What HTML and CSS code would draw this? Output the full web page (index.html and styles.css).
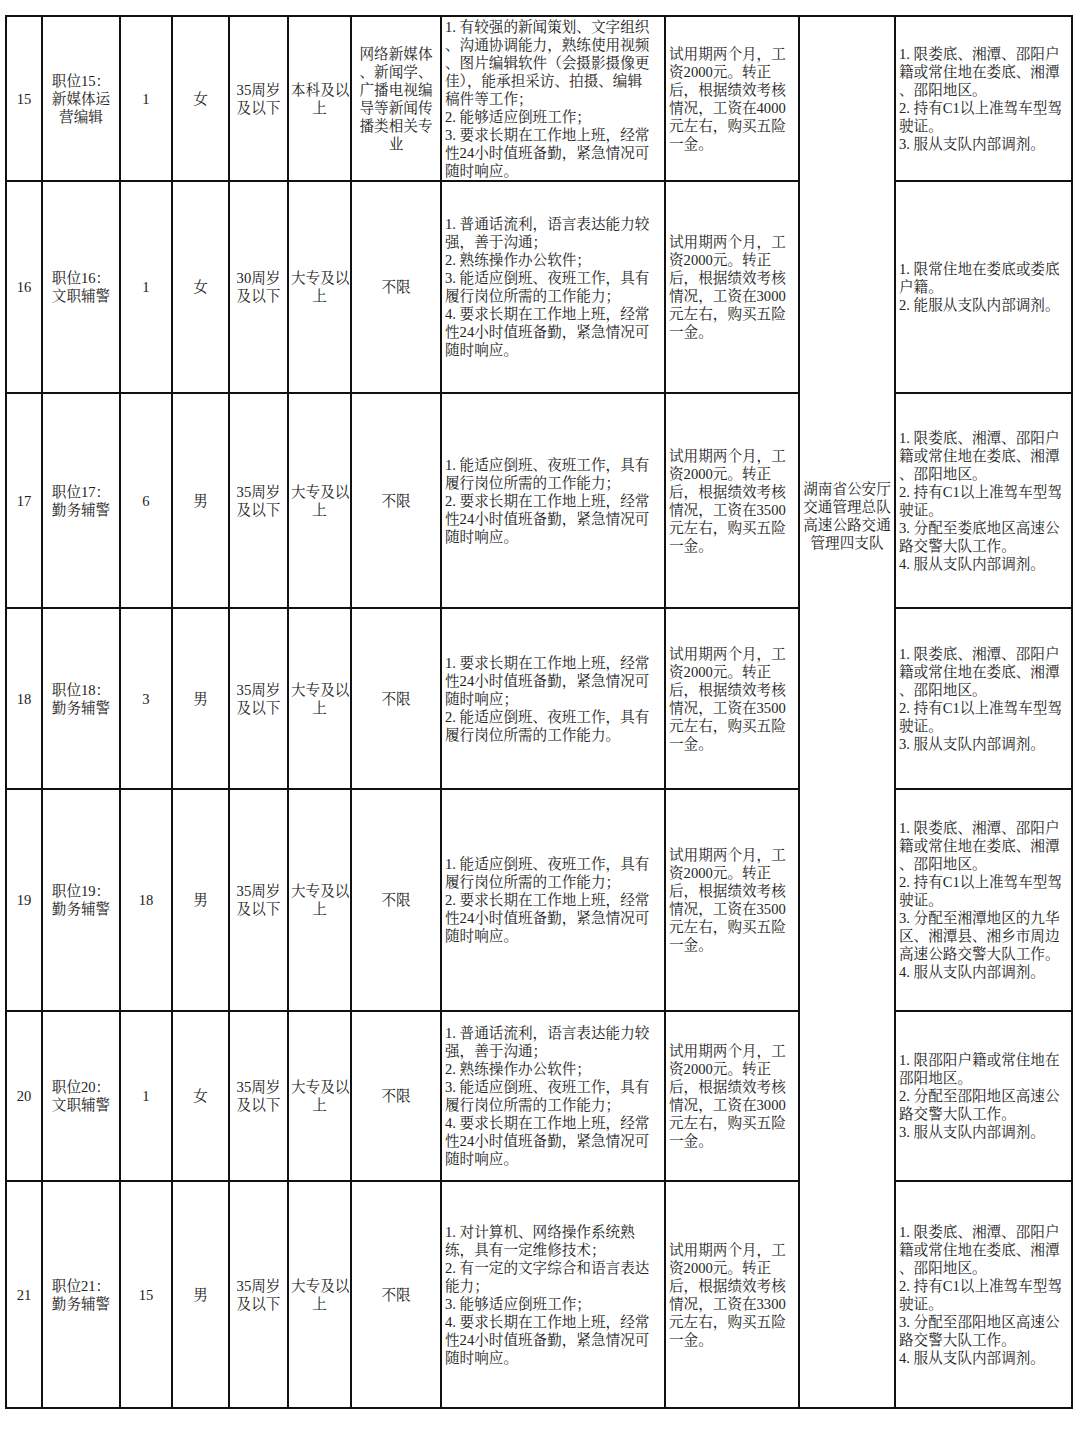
FILE: index.html
```html
<!DOCTYPE html>
<html lang="zh-CN">
<head>
<meta charset="utf-8">
<title>岗位表</title>
<link rel="stylesheet" href="styles.css">
</head>
<body>
<table class="sheet">
  <colgroup>
    <col class="c-no"><col class="c-pos"><col class="c-num"><col class="c-sex"><col class="c-age"><col class="c-edu"><col class="c-major"><col class="c-req"><col class="c-pay"><col class="c-unit"><col class="c-cond">
  </colgroup>
  <tbody>
    <tr class="r15">
      <td>15</td>
      <td>职位15：<br>新媒体运<br>营编辑</td>
      <td>1</td>
      <td>女</td>
      <td>35周岁<br>及以下</td>
      <td>本科及以<br>上</td>
      <td>网络新媒体<br>、新闻学、<br>广播电视编<br>导等新闻传<br>播类相关专<br>业</td>
      <td class="l">1. 有较强的新闻策划、文字组织<br>、沟通协调能力，熟练使用视频<br>、图片编辑软件（会摄影摄像更<br>佳），能承担采访、拍摄、编辑<br>稿件等工作；<br>2. 能够适应倒班工作；<br>3. 要求长期在工作地上班，经常<br>性24小时值班备勤，紧急情况可<br>随时响应。</td>
      <td class="l">试用期两个月，工<br>资2000元。转正<br>后，根据绩效考核<br>情况，工资在4000<br>元左右，购买五险<br>一金。</td>
      <td class="unit" rowspan="7">湖南省公安厅<br>交通管理总队<br>高速公路交通<br>管理四支队</td>
      <td class="l">1. 限娄底、湘潭、邵阳户<br>籍或常住地在娄底、湘潭<br>、邵阳地区。<br>2. 持有C1以上准驾车型驾<br>驶证。<br>3. 服从支队内部调剂。</td>
    </tr>
    <tr class="r16">
      <td>16</td>
      <td>职位16：<br>文职辅警</td>
      <td>1</td>
      <td>女</td>
      <td>30周岁<br>及以下</td>
      <td>大专及以<br>上</td>
      <td>不限</td>
      <td class="l">1. 普通话流利，语言表达能力较<br>强，善于沟通；<br>2. 熟练操作办公软件；<br>3. 能适应倒班、夜班工作，具有<br>履行岗位所需的工作能力；<br>4. 要求长期在工作地上班，经常<br>性24小时值班备勤，紧急情况可<br>随时响应。</td>
      <td class="l">试用期两个月，工<br>资2000元。转正<br>后，根据绩效考核<br>情况，工资在3000<br>元左右，购买五险<br>一金。</td>
      <td class="l">1. 限常住地在娄底或娄底<br>户籍。<br>2. 能服从支队内部调剂。</td>
    </tr>
    <tr class="r17">
      <td>17</td>
      <td>职位17：<br>勤务辅警</td>
      <td>6</td>
      <td>男</td>
      <td>35周岁<br>及以下</td>
      <td>大专及以<br>上</td>
      <td>不限</td>
      <td class="l">1. 能适应倒班、夜班工作，具有<br>履行岗位所需的工作能力；<br>2. 要求长期在工作地上班，经常<br>性24小时值班备勤，紧急情况可<br>随时响应。</td>
      <td class="l">试用期两个月，工<br>资2000元。转正<br>后，根据绩效考核<br>情况，工资在3500<br>元左右，购买五险<br>一金。</td>
      <td class="l">1. 限娄底、湘潭、邵阳户<br>籍或常住地在娄底、湘潭<br>、邵阳地区。<br>2. 持有C1以上准驾车型驾<br>驶证。<br>3. 分配至娄底地区高速公<br>路交警大队工作。<br>4. 服从支队内部调剂。</td>
    </tr>
    <tr class="r18">
      <td>18</td>
      <td>职位18：<br>勤务辅警</td>
      <td>3</td>
      <td>男</td>
      <td>35周岁<br>及以下</td>
      <td>大专及以<br>上</td>
      <td>不限</td>
      <td class="l">1. 要求长期在工作地上班，经常<br>性24小时值班备勤，紧急情况可<br>随时响应；<br>2. 能适应倒班、夜班工作，具有<br>履行岗位所需的工作能力。</td>
      <td class="l">试用期两个月，工<br>资2000元。转正<br>后，根据绩效考核<br>情况，工资在3500<br>元左右，购买五险<br>一金。</td>
      <td class="l">1. 限娄底、湘潭、邵阳户<br>籍或常住地在娄底、湘潭<br>、邵阳地区。<br>2. 持有C1以上准驾车型驾<br>驶证。<br>3. 服从支队内部调剂。</td>
    </tr>
    <tr class="r19">
      <td>19</td>
      <td>职位19：<br>勤务辅警</td>
      <td>18</td>
      <td>男</td>
      <td>35周岁<br>及以下</td>
      <td>大专及以<br>上</td>
      <td>不限</td>
      <td class="l">1. 能适应倒班、夜班工作，具有<br>履行岗位所需的工作能力；<br>2. 要求长期在工作地上班，经常<br>性24小时值班备勤，紧急情况可<br>随时响应。</td>
      <td class="l">试用期两个月，工<br>资2000元。转正<br>后，根据绩效考核<br>情况，工资在3500<br>元左右，购买五险<br>一金。</td>
      <td class="l">1. 限娄底、湘潭、邵阳户<br>籍或常住地在娄底、湘潭<br>、邵阳地区。<br>2. 持有C1以上准驾车型驾<br>驶证。<br>3. 分配至湘潭地区的九华<br>区、湘潭县、湘乡市周边<br>高速公路交警大队工作。<br>4. 服从支队内部调剂。</td>
    </tr>
    <tr class="r20">
      <td>20</td>
      <td>职位20：<br>文职辅警</td>
      <td>1</td>
      <td>女</td>
      <td>35周岁<br>及以下</td>
      <td>大专及以<br>上</td>
      <td>不限</td>
      <td class="l">1. 普通话流利，语言表达能力较<br>强，善于沟通；<br>2. 熟练操作办公软件；<br>3. 能适应倒班、夜班工作，具有<br>履行岗位所需的工作能力；<br>4. 要求长期在工作地上班，经常<br>性24小时值班备勤，紧急情况可<br>随时响应。</td>
      <td class="l">试用期两个月，工<br>资2000元。转正<br>后，根据绩效考核<br>情况，工资在3000<br>元左右，购买五险<br>一金。</td>
      <td class="l">1. 限邵阳户籍或常住地在<br>邵阳地区。<br>2. 分配至邵阳地区高速公<br>路交警大队工作。<br>3. 服从支队内部调剂。</td>
    </tr>
    <tr class="r21">
      <td>21</td>
      <td>职位21：<br>勤务辅警</td>
      <td>15</td>
      <td>男</td>
      <td>35周岁<br>及以下</td>
      <td>大专及以<br>上</td>
      <td>不限</td>
      <td class="l">1. 对计算机、网络操作系统熟<br>练，具有一定维修技术；<br>2. 有一定的文字综合和语言表达<br>能力；<br>3. 能够适应倒班工作；<br>4. 要求长期在工作地上班，经常<br>性24小时值班备勤，紧急情况可<br>随时响应。</td>
      <td class="l">试用期两个月，工<br>资2000元。转正<br>后，根据绩效考核<br>情况，工资在3300<br>元左右，购买五险<br>一金。</td>
      <td class="l">1. 限娄底、湘潭、邵阳户<br>籍或常住地在娄底、湘潭<br>、邵阳地区。<br>2. 持有C1以上准驾车型驾<br>驶证。<br>3. 分配至邵阳地区高速公<br>路交警大队工作。<br>4. 服从支队内部调剂。</td>
    </tr>
  </tbody>
</table>
</body>
</html>
```
FILE: styles.css
```css
html, body {
  margin: 0;
  padding: 0;
  background: #ffffff;
}

body {
  font-family: "Liberation Serif", "Noto Serif CJK SC", "Noto Sans CJK SC", serif;
  font-size: 14.6px;
  line-height: 18px;
  color: #222222;
}

.sheet {
  border-collapse: collapse;
  table-layout: fixed;
  width: 1068px;
  margin: 15px 0 0 5px;
}

.sheet td {
  border: 2px solid #111111;
  padding: 0 2px;
  text-align: center;
  vertical-align: middle;
  white-space: nowrap;
  overflow: hidden;
}

.sheet td.l {
  text-align: left;
  padding-left: 3px;
}

.sheet td.unit {
  vertical-align: top;
  padding-top: 463px;
}

.c-no { width: 36px; }
.c-pos { width: 78px; }
.c-num { width: 52px; }
.c-sex { width: 57px; }
.c-age { width: 59px; }
.c-edu { width: 63px; }
.c-major { width: 90px; }
.c-req { width: 224px; }
.c-pay { width: 134px; }
.c-unit { width: 96px; }
.c-cond { width: 177px; }

.r15 { height: 165px; }
.r16 { height: 212px; }
.r17 { height: 215px; }
.r18 { height: 181px; }
.r19 { height: 222px; }
.r20 { height: 170px; }
.r21 { height: 227px; }
```
